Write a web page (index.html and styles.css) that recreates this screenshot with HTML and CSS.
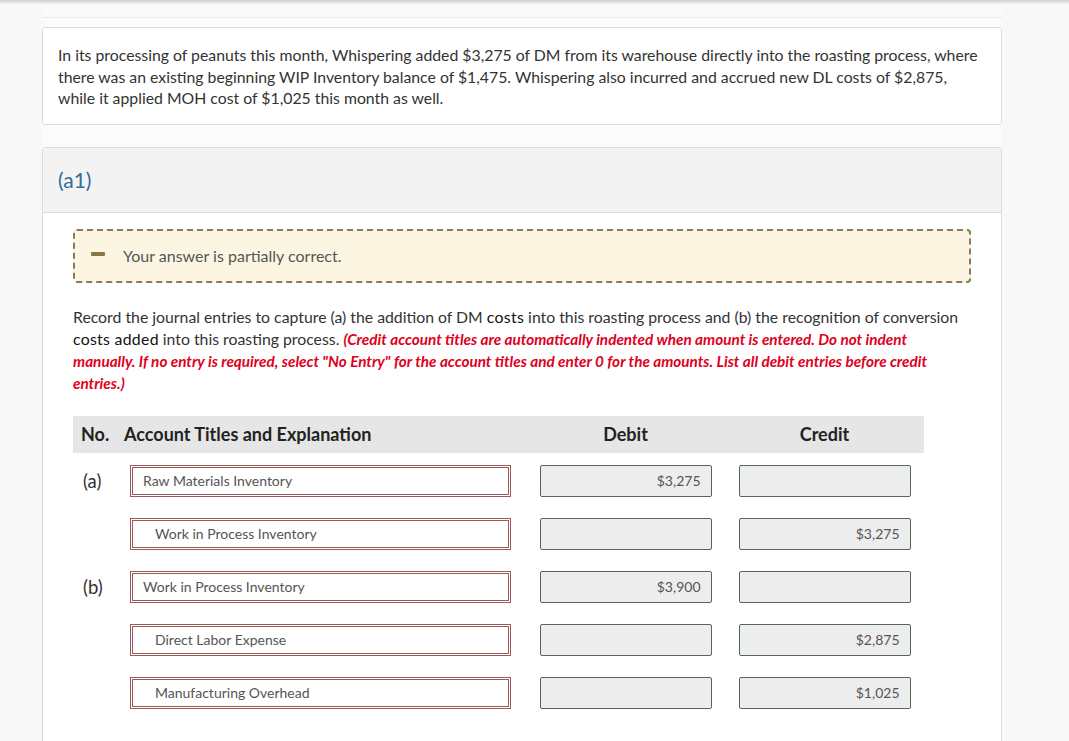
FILE: index.html
```html
<!DOCTYPE html>
<html>
<head>
<meta charset="utf-8">
<link rel="stylesheet" href="styles.css">
</head>
<body>
<div class="topshadow"></div>
<div class="page">
  <div class="prev"></div>
  <div class="card intro">
    In its processing of peanuts this month, Whispering added $3,275 of DM from its warehouse directly into the roasting process, where there was an existing beginning WIP Inventory balance of $1,475. Whispering also incurred and accrued new DL costs of $2,875, while it applied MOH cost of $1,025 this month as well.
  </div>
  <div class="card part">
    <div class="part-head">(a1)</div>
    <div class="part-body">
      <div class="notice">
        <span class="dash"></span>
        <span>Your answer is partially correct.</span>
      </div>
      <p class="instr">Record the journal entries to capture (a) the addition of DM <span class="term">costs</span> into this roasting process and (b) the recognition of conversion <span class="term">costs added</span> into this roasting process. <em class="red">(Credit account titles are automatically indented when amount is entered. Do not indent manually. If no entry is required, select "No Entry" for the account titles and enter 0 for the amounts. List all debit entries before credit entries.)</em></p>
      <div class="journal">
        <div class="jhead">
          <div class="c-no">No.</div>
          <div class="c-acct">Account Titles and Explanation</div>
          <div class="c-amt">Debit</div>
          <div class="c-amt">Credit</div>
        </div>
        <div class="jrow">
          <div class="c-no lbl">(a)</div>
          <div class="c-acct"><div class="acct">Raw Materials Inventory</div></div>
          <div class="c-amt"><div class="amt">$3,275</div></div>
          <div class="c-amt"><div class="amt"></div></div>
        </div>
        <div class="jrow">
          <div class="c-no lbl"></div>
          <div class="c-acct"><div class="acct indent">Work in Process Inventory</div></div>
          <div class="c-amt"><div class="amt"></div></div>
          <div class="c-amt"><div class="amt">$3,275</div></div>
        </div>
        <div class="jrow">
          <div class="c-no lbl">(b)</div>
          <div class="c-acct"><div class="acct">Work in Process Inventory</div></div>
          <div class="c-amt"><div class="amt">$3,900</div></div>
          <div class="c-amt"><div class="amt"></div></div>
        </div>
        <div class="jrow">
          <div class="c-no lbl"></div>
          <div class="c-acct"><div class="acct indent">Direct Labor Expense</div></div>
          <div class="c-amt"><div class="amt"></div></div>
          <div class="c-amt"><div class="amt">$2,875</div></div>
        </div>
        <div class="jrow">
          <div class="c-no lbl"></div>
          <div class="c-acct"><div class="acct indent">Manufacturing Overhead</div></div>
          <div class="c-amt"><div class="amt"></div></div>
          <div class="c-amt"><div class="amt">$1,025</div></div>
        </div>
      </div>
    </div>
  </div>
</div>
</body>
</html>
```
FILE: styles.css
```css
* { box-sizing: border-box; }
html, body { margin: 0; padding: 0; }
body {
  background: #f8f8f8;
  font-family: Lato, "Open Sans", sans-serif;
  color: #333;
  overflow: hidden;
  height: 741px;
}
.topshadow {
  height: 4px;
  background: linear-gradient(#cfcfcf, #f3f3f3);
}
.page {
  width: 960px;
  margin-left: 42px;
  background: #fbfbfb;
}
.prev {
  height: 14px;
  border-bottom: 1px solid #ececec;
  margin-bottom: 9px;
  background: #fafafa;
}
.card {
  background: #fff;
  border: 1px solid #dcdcdc;
  border-radius: 3px;
}
.intro {
  padding: 16px 15px 15px 15px;
  font-size: 15.8px;
  line-height: 21.5px;
  margin-bottom: 22px;
}
.part-head {
  background: #f3f3f3;
  height: 65px;
  border-bottom: 1px solid #dcdcdc;
  padding-left: 15px;
  display: flex;
  align-items: center;
  font-size: 21px;
  color: #2f6d9b;
}
.part-body {
  padding: 16px 30px 40px 30px;
}
.notice {
  height: 54px;
  border: 2px dashed #8b7a55;
  border-radius: 4px;
  background: #fcf5e2;
  display: flex;
  align-items: center;
  padding-left: 16px;
  font-size: 16px;
  color: #555;
}
.dash {
  display: inline-block;
  width: 14px;
  height: 4px;
  background: #8a7546;
  border-radius: 1px;
  margin-right: 18px;
  margin-top: -4px;
}
.instr {
  margin: 23px 0 22px 0;
  padding-right: 8px;
  font-size: 15.8px;
  line-height: 22px;
  color: #333;
}
.term { color: #111; letter-spacing: 0.3px; }
.red {
  color: #e0001b;
  font-weight: bold;
  font-style: italic;
  font-size: 15.3px;
}
.journal { width: 851px; }
.jhead {
  display: flex;
  align-items: center;
  height: 37px;
  background: #e6e6e6;
  font-weight: bold;
  font-size: 18px;
  color: #222;
}
.c-no { width: 51px; padding-left: 8px; flex: none; }
.c-acct { width: 402px; flex: none; padding-left: 6px; }
.jhead .c-acct { padding-left: 0; }
.c-amt { width: 199px; flex: none; display: flex; justify-content: center; }
.jrow {
  display: flex;
  align-items: center;
  margin-top: 12px;
}
.jrow + .jrow { margin-top: 21px; }
.lbl { font-size: 18.5px; color: #333; padding-left: 10px; }
.acct {
  width: 381px;
  height: 32px;
  border: 3px double #9c5a58;
  font-size: 14px;
  color: #555;
  display: flex;
  align-items: center;
  padding-left: 10px;
}
.acct.indent { padding-left: 22px; }
.amt {
  width: 172px;
  height: 32px;
  border: 1px solid #51694f;
  border-radius: 2px;
  background: #ededed;
  font-size: 14px;
  color: #555;
  display: flex;
  align-items: center;
  justify-content: flex-end;
  padding-right: 10px;
}
```
